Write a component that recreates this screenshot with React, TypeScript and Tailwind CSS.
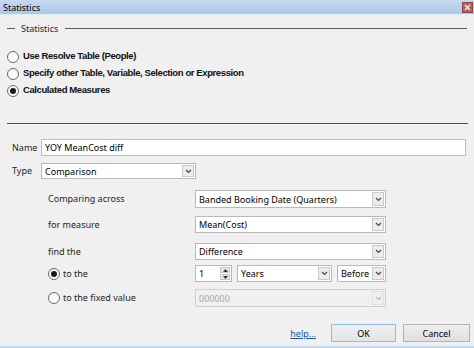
import React from "react";

function Chevron({ disabled = false }: { disabled?: boolean }) {
  return (
    <svg width="7" height="5" viewBox="0 0 7 5">
      <polyline points="1,1 3.5,3.5 6,1" fill="none" stroke={disabled ? "#b8b8b8" : "#4a4a4a"} strokeWidth="1.2" />
    </svg>
  );
}

function Combo({ value, className = "", disabled = false }: { value: string; className?: string; disabled?: boolean }) {
  return (
    <div
      className={`flex items-stretch border ${disabled ? "border-[#cfcfcf] bg-[#f0f0f0] text-[#a8a8a8]" : "border-[#b9b9b9] bg-white text-black"} ${className}`}
    >
      <div className="flex-1 flex items-center pl-[3px] leading-none whitespace-nowrap overflow-hidden">{value}</div>
      <div
        className={`w-[12px] my-[1px] mr-[1px] flex items-center justify-center border ${disabled ? "border-[#e2e2e2] bg-[#f0f0f0]" : "border-[#c9c9c9] bg-[#ececec]"}`}
      >
        <Chevron disabled={disabled} />
      </div>
    </div>
  );
}

function Radio({ checked }: { checked: boolean }) {
  return (
    <div className="w-[12px] h-[12px] rounded-full border border-[#6a6a6a] bg-gradient-to-b from-[#f4f4f4] to-white flex items-center justify-center shrink-0">
      {checked && <div className="w-[6px] h-[6px] rounded-full bg-[#1a1a1a]" />}
    </div>
  );
}

export default function App() {
  return (
    <div className="w-[474px] h-[348px] bg-[#f0f0f0] flex flex-col text-[9px] text-[#1e1e1e] font-['Noto_Sans',sans-serif] overflow-hidden">
      {/* Title bar */}
      <div className="h-[14px] shrink-0 bg-gradient-to-b from-[#c6daf0] to-[#aec8e6] flex items-center justify-between pl-[3px] pr-[1px]">
        <span className="text-[9px] leading-none text-black">Statistics</span>
        <div className="w-[11px] h-[11px] bg-[#b0605e] border border-[#8a4644] flex items-center justify-center">
          <svg width="7" height="7" viewBox="0 0 7 7">
            <path d="M1 1 L6 6 M6 1 L1 6" stroke="#f3e6e6" strokeWidth="1.6" />
          </svg>
        </div>
      </div>
      <div className="h-[1px] bg-[#dfe9f4] shrink-0" />

      <div className="flex-1 flex flex-col px-[7px]">
        {/* Group header */}
        <div className="mt-[7px] h-[13px] flex items-center">
          <div className="w-[8px] h-[1px] bg-[#5a5a5a]" />
          <span className="ml-[6px] mr-[7px] leading-none">Statistics</span>
          <div className="flex-1 h-[1px] bg-[#5a5a5a]" />
        </div>

        {/* Radios */}
        <div className="mt-[13px] flex flex-col font-['Liberation_Sans',sans-serif] font-bold text-[9.5px] tracking-[-0.4px] text-[#111]">
          <div className="h-[17px] flex items-center gap-[4px]">
            <Radio checked={false} />
            <span>Use Resolve Table (People)</span>
          </div>
          <div className="h-[17px] flex items-center gap-[4px]">
            <Radio checked={false} />
            <span>Specify other Table, Variable, Selection or Expression</span>
          </div>
          <div className="h-[17px] flex items-center gap-[4px]">
            <Radio checked={true} />
            <span>Calculated Measures</span>
          </div>
        </div>

        {/* Separator */}
        <div className="mt-[24px] mr-[-1px] h-[1px] bg-[#4e4e4e]" />

        {/* Name / Type */}
        <div className="mt-[15px] flex items-center h-[17px]">
          <span className="w-[34px] pl-[5px]">Name</span>
          <div className="flex-1 mr-[1px] h-[17px] border border-[#bdbdbd] bg-white flex items-center pl-[3px] leading-none text-black">
            YOY MeanCost diff
          </div>
        </div>
        <div className="mt-[7px] flex items-center h-[16px]">
          <span className="w-[34px] pl-[5px]">Type</span>
          <Combo value="Comparison" className="w-[155px] h-[16px]" />
        </div>

        {/* Comparison details */}
        <div className="mt-[11px] flex items-center h-[18px]">
          <span className="w-[188px] pl-[41px]">Comparing across</span>
          <Combo value="Banded Booking Date (Quarters)" className="w-[191px] h-[18px]" />
        </div>
        <div className="mt-[8px] flex items-center h-[17px]">
          <span className="w-[188px] pl-[41px]">for measure</span>
          <Combo value="Mean(Cost)" className="w-[191px] h-[17px]" />
        </div>
        <div className="mt-[10px] flex items-center h-[17px]">
          <span className="w-[188px] pl-[41px]">find the</span>
          <Combo value="Difference" className="w-[191px] h-[17px]" />
        </div>
        <div className="mt-[5px] flex items-center h-[17px]">
          <div className="w-[188px] pl-[41px] flex items-center gap-[3px]">
            <Radio checked={true} />
            <span>to the</span>
          </div>
          <div className="w-[37px] h-[17px] flex border border-[#b9b9b9] bg-white">
            <div className="flex-1 flex items-center pl-[3px] leading-none text-black">1</div>
            <div className="w-[12px] flex flex-col gap-[1px] p-[1px]">
              <div className="flex-1 bg-[#e6e6e6] border border-[#c9c9c9] flex items-center justify-center">
                <svg width="5" height="3" viewBox="0 0 5 3"><path d="M0 3 L2.5 0 L5 3 Z" fill="#333" /></svg>
              </div>
              <div className="flex-1 bg-[#e6e6e6] border border-[#c9c9c9] flex items-center justify-center">
                <svg width="5" height="3" viewBox="0 0 5 3"><path d="M0 0 L2.5 3 L5 0 Z" fill="#333" /></svg>
              </div>
            </div>
          </div>
          <Combo value="Years" className="ml-[5px] w-[95px] h-[17px]" />
          <Combo value="Before" className="ml-[5px] w-[49px] h-[17px]" />
        </div>
        <div className="mt-[7px] flex items-center h-[18px]">
          <div className="w-[188px] pl-[41px] flex items-center gap-[3px]">
            <Radio checked={false} />
            <span>to the fixed value</span>
          </div>
          <Combo value="000000" disabled className="w-[191px] h-[18px]" />
        </div>

        {/* Buttons */}
        <div className="mt-auto mb-[4px] flex items-center justify-end h-[18px]">
          <span className="text-[#1a57b5] underline leading-none mr-[15px]">help...</span>
          <div className="w-[65px] h-[18px] border border-[#8fbce8] bg-gradient-to-b from-[#eef0f2] to-[#e2e4e6] flex items-center justify-center leading-none text-black">
            OK
          </div>
          <div className="ml-[7px] mr-[-3px] w-[67px] h-[18px] border border-[#b4b4b4] bg-gradient-to-b from-[#eeeeee] to-[#e0e0e0] flex items-center justify-center leading-none text-black">
            Cancel
          </div>
        </div>
      </div>
      <div className="h-[2px] shrink-0 bg-[#c4d8ee]" />
    </div>
  );
}
